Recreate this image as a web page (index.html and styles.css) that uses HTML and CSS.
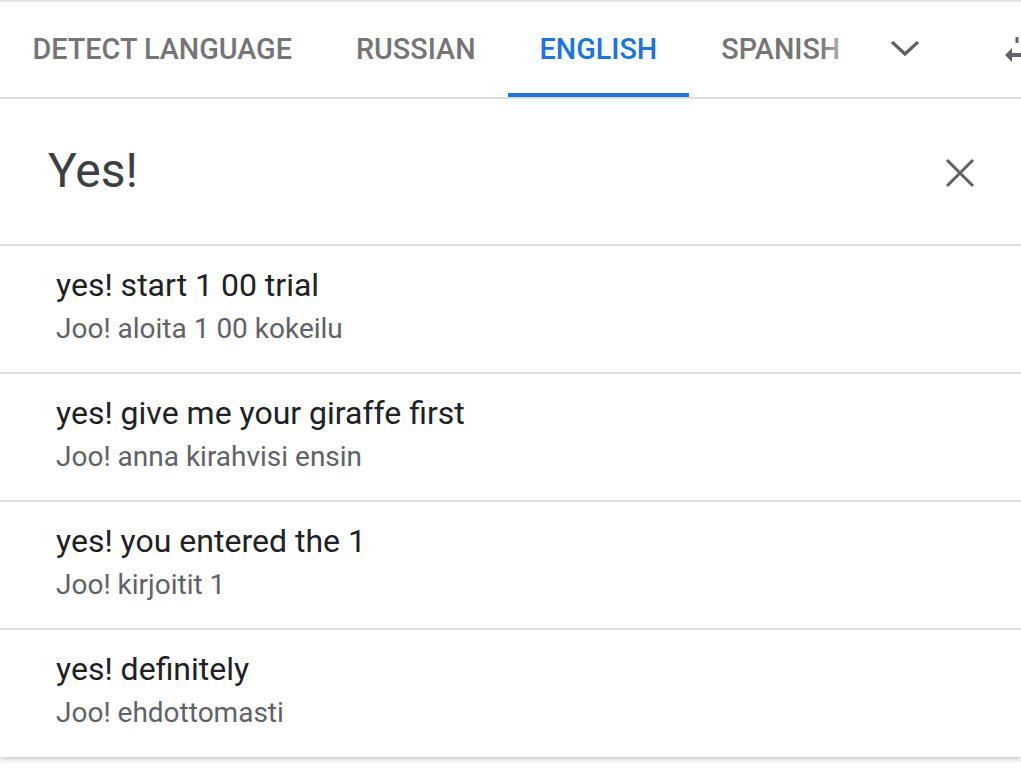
FILE: index.html
```html
<!DOCTYPE html>
<html lang="en">
<head>
<meta charset="utf-8">
<title>Translate</title>
<link rel="stylesheet" href="styles.css">
</head>
<body>
<div class="app">
  <div class="tabs">
    <div class="tab">DETECT LANGUAGE</div>
    <div class="tab">RUSSIAN</div>
    <div class="tab active">ENGLISH</div>
    <div class="tab">SPANISH</div>
    <div class="more">
      <svg width="30" height="18" viewBox="0 0 30 18"><path d="M2 3 L15 15 L28 3" fill="none" stroke="#5f6368" stroke-width="3.2"/></svg>
    </div>
    <div class="swap">
      <svg width="40" height="30" viewBox="0 0 40 30"><path d="M2 21 L9 14 L9 19 L26 19 L26 23 L9 23 L9 28 Z" fill="#5f6368"/><path d="M14 3 L14 9" stroke="#5f6368" stroke-width="3"/></svg>
    </div>
  </div>
  <div class="input">
    <div class="query">Yes!</div>
    <button class="clear" aria-label="Clear">
      <svg width="30" height="30" viewBox="0 0 30 30"><path d="M2 2 L28 28 M28 2 L2 28" stroke="#5f6368" stroke-width="3"/></svg>
    </button>
  </div>
  <div class="list">
    <div class="row">
      <div class="primary">yes! start 1 00 trial</div>
      <div class="secondary">Joo! aloita 1 00 kokeilu</div>
    </div>
    <div class="row">
      <div class="primary">yes! give me your giraffe first</div>
      <div class="secondary">Joo! anna kirahvisi ensin</div>
    </div>
    <div class="row">
      <div class="primary">yes! you entered the 1</div>
      <div class="secondary">Joo! kirjoitit 1</div>
    </div>
    <div class="row">
      <div class="primary">yes! definitely</div>
      <div class="secondary">Joo! ehdottomasti</div>
    </div>
  </div>
</div>
</body>
</html>
```
FILE: styles.css
```css
html, body {
  margin: 0;
  padding: 0;
  background: #ffffff;
}
body {
  font-family: Roboto, "Noto Sans", "Liberation Sans", sans-serif;
  width: 1021px;
  height: 778px;
  overflow: hidden;
}
.app {
  width: 1021px;
}
.tabs {
  display: flex;
  align-items: stretch;
  height: 95px;
  border-top: 2px solid #e3e3e3;
  border-bottom: 2px solid #dedede;
  overflow: hidden;
  white-space: nowrap;
}
.tab {
  display: flex;
  align-items: center;
  padding: 0 32px 2px 32px;
  font-size: 28.75px;
  font-weight: 500;
  color: #757575;
  flex: none;
}
.tab:first-child {
  padding-left: 32.5px;
}
.tab.active {
  color: #1a73e8;
  box-shadow: inset 0 -4px 0 #1a73e8;
}
.more {
  position: relative;
  flex: none;
  width: 66px;
  display: flex;
  align-items: center;
  justify-content: center;
  padding-bottom: 3px;
  background: #fff;
}
.more::before {
  content: "";
  position: absolute;
  left: -52px;
  top: 0;
  width: 52px;
  height: 100%;
  background: linear-gradient(to right, rgba(255,255,255,0), #fff 92%);
}
.swap {
  flex: none;
  display: flex;
  align-items: center;
  padding-left: 65px;
  padding-bottom: 2px;
}
.input {
  display: flex;
  align-items: center;
  justify-content: space-between;
  height: 145px;
  padding: 0 46px 0 48px;
  border-bottom: 2px solid #e0e0e0;
}
.query {
  font-size: 48px;
  line-height: 56px;
  color: #3c4043;
  margin-top: -2px;
}
.clear {
  border: 0;
  background: none;
  padding: 0;
  width: 30px;
  height: 30px;
  margin-top: 2px;
  display: flex;
}
.list {
  box-shadow: 0 3px 4px rgba(0,0,0,0.18);
}
.row {
  padding: 20px 56px 26px;
  border-bottom: 2px solid #e0e0e0;
}
.row:last-child {
  border-bottom: 0;
  padding-bottom: 27px;
}
.primary {
  font-size: 32px;
  line-height: 38px;
  color: #202124;
}
.secondary {
  margin-top: 8px;
  font-size: 28px;
  line-height: 34px;
  color: #5f6368;
}
```
